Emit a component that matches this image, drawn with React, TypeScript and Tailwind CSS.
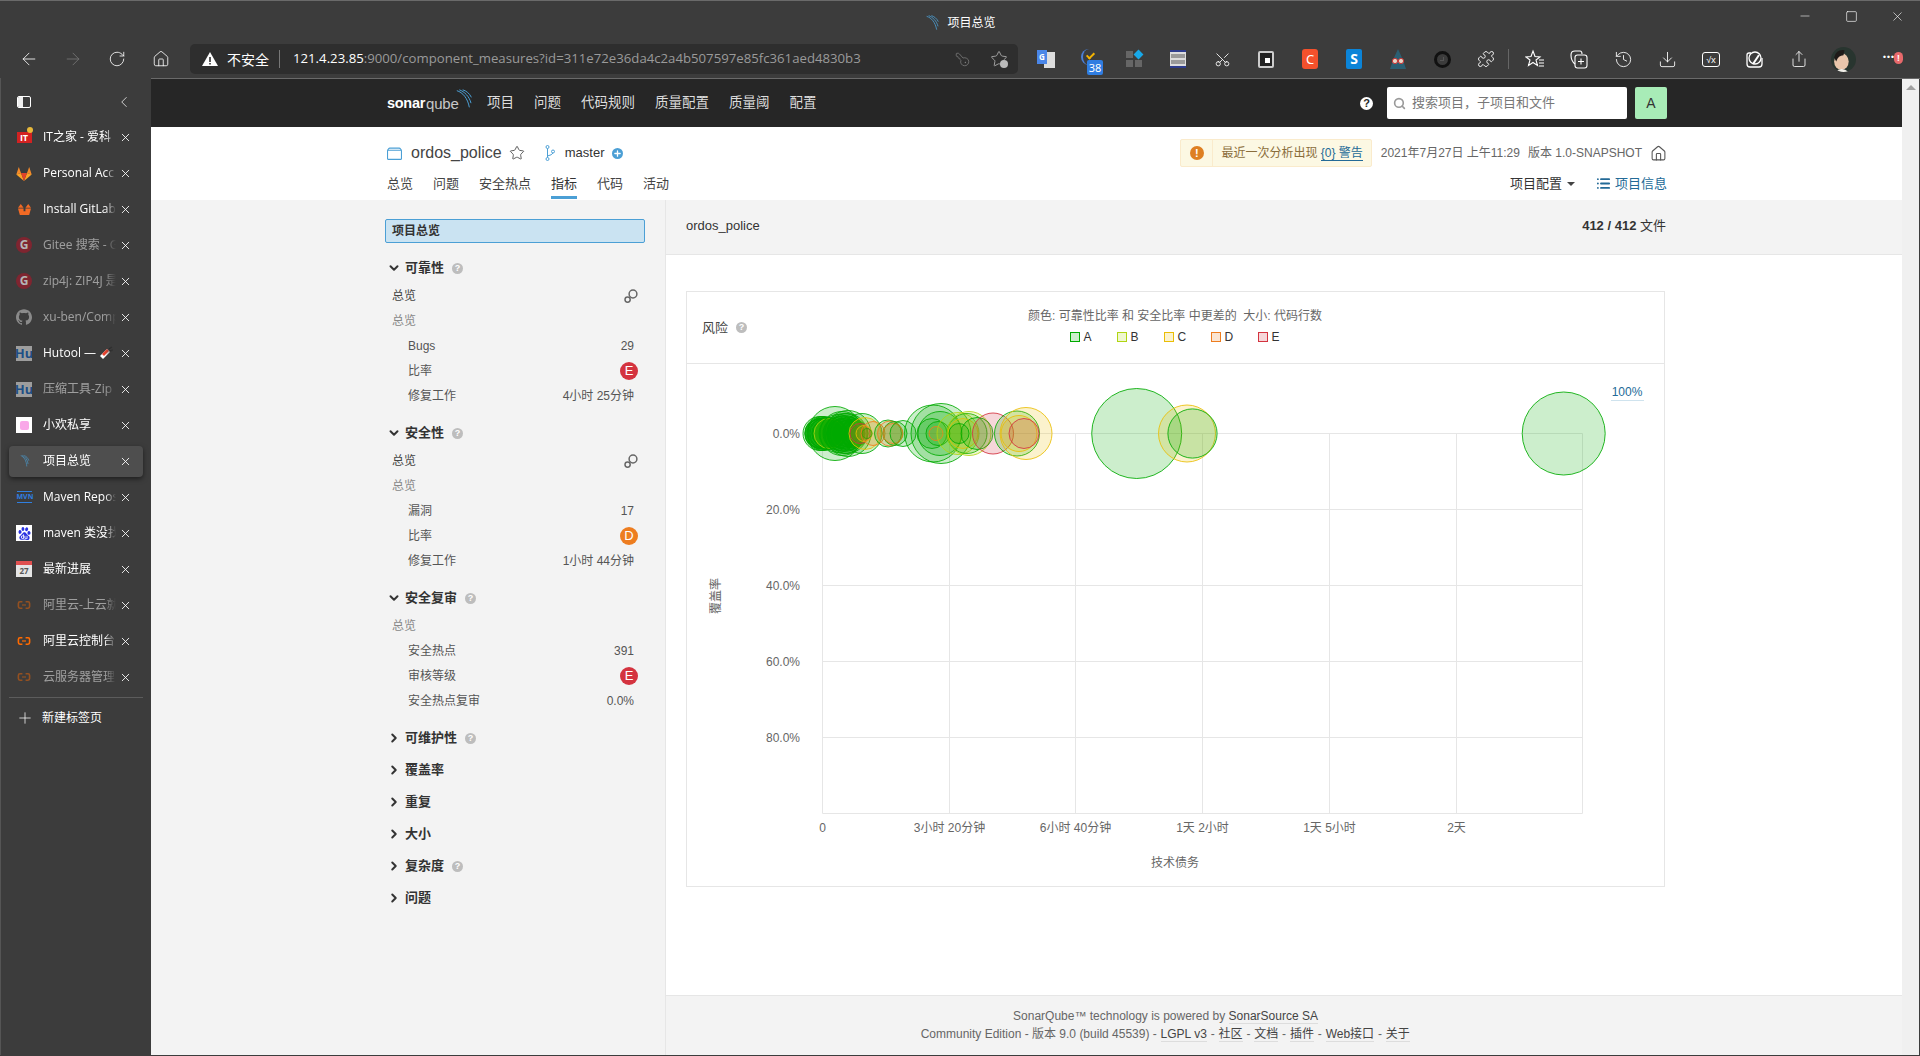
import type { ReactNode } from "react";
import {
  ArrowLeft,
  ArrowRight,
  ChevronDown,
  ChevronLeft,
  ChevronRight,
  Download,
  History,
  Home,
  KeyRound,
  List,
  Minus,
  Plus,
  Puzzle,
  RotateCw,
  Scissors,
  Search,
  Share,
  Square,
  Star,
  X,
} from "lucide-react";
import { SiBaidu, SiGithub } from "react-icons/si";

// Rating colours used by the bubble chart and the legend.
const RATING = {
  A: "#00aa00",
  B: "#b0d513",
  C: "#eabe06",
  D: "#ed7d20",
  E: "#d4333f",
} as const;

type Rating = keyof typeof RATING;

// [rating, x, radius] on page pixels, all sitting on the 0.0% line.
const BUBBLES: [Rating, number, number][] = [
  ["A", 835, 27],
  ["A", 1136.7, 45],
  ["C", 1187, 28.5],
  ["A", 1192.5, 24.6],
  ["A", 1563.7, 41.5],
  ["A", 822, 17],
  ["A", 823, 16],
  ["A", 821, 15],
  ["A", 824, 17],
  ["A", 826, 16],
  ["A", 819, 14],
  ["A", 820, 17],
  ["A", 828, 15],
  ["A", 830, 14],
  ["A", 825, 13],
  ["A", 822, 14],
  ["A", 824, 15],
  ["A", 827, 13],
  ["A", 820, 15],
  ["A", 826, 14],
  ["A", 829, 16],
  ["A", 832, 15],
  ["A", 834, 13],
  ["A", 836, 16],
  ["B", 829, 15],
  ["A", 848, 23],
  ["A", 847, 20],
  ["A", 845, 18],
  ["A", 840, 17],
  ["A", 843, 15],
  ["A", 850, 14],
  ["A", 846, 13],
  ["A", 852, 12],
  ["A", 844, 20],
  ["A", 842, 22],
  ["A", 849, 16],
  ["A", 841, 14],
  ["A", 854, 14],
  ["A", 838, 19],
  ["A", 847, 17],
  ["A", 856, 12],
  ["A", 862, 20],
  ["C", 865, 16],
  ["E", 860, 10],
  ["C", 864, 8],
  ["A", 867, 5],
  ["D", 873, 12],
  ["A", 888, 13.5],
  ["D", 890, 12.5],
  ["A", 895, 12],
  ["D", 893, 10],
  ["A", 903, 13],
  ["A", 933, 28.5],
  ["A", 941, 30],
  ["A", 940, 22],
  ["A", 932, 15],
  ["A", 938, 12],
  ["D", 936, 7],
  ["B", 958, 21],
  ["A", 967, 20],
  ["C", 963, 15],
  ["B", 969, 22],
  ["A", 959, 10],
  ["A", 977, 16],
  ["E", 993, 20.5],
  ["A", 1017, 22.5],
  ["C", 1026, 26],
  ["C", 1019, 18],
  ["E", 1024, 15],
];

const Y_TICKS = [
  ["0.0%", 433.5],
  ["20.0%", 509.5],
  ["40.0%", 585.5],
  ["60.0%", 661.5],
  ["80.0%", 737.5],
] as const;

const X_TICKS = [
  ["0", 822.5],
  ["3小时 20分钟", 949.5],
  ["6小时 40分钟", 1075.5],
  ["1天 2小时", 1202.5],
  ["1天 5小时", 1329.5],
  ["2天", 1456.5],
] as const;

function SonarArcs({ className }: { className?: string }) {
  return (
    <svg viewBox="0 0 20 24" fill="none" stroke="#4b9fd5" strokeWidth="1.2" className={className}>
      <path d="M2 2 C9 4 15 11 17 22" />
      <path d="M5 1 C11 3 17 9 19 17" />
      <path d="M9 1 C13 2 17 5 19.5 10" />
    </svg>
  );
}

function AliIcon() {
  return (
    <svg viewBox="0 0 16 10" className="h-[8px] w-[16px]" fill="none" stroke="#ff6a00" strokeWidth="2">
      <path d="M6 1 H3 Q1 1 1 3 V7 Q1 9 3 9 H6" />
      <path d="M10 1 H13 Q15 1 15 3 V7 Q15 9 13 9 H10" />
      <path d="M5.5 5 H10.5" strokeWidth="1.5" />
    </svg>
  );
}

function HuIcon() {
  return (
    <div className="flex h-[15px] w-[16px] items-center justify-center overflow-hidden bg-[#9d9d9d] text-[13px] font-bold leading-none text-[#1d4f86]">
      Hu
    </div>
  );
}

function GiteeIcon() {
  return (
    <div className="flex h-[16px] w-[16px] items-center justify-center rounded-full bg-[#7f2530] text-[12px] font-bold leading-none text-[#b5b5b5]">
      G
    </div>
  );
}

function GitLabIcon() {
  return (
    <svg viewBox="0 0 16 15" className="h-[15px] w-[16px]">
      <path d="M0.3 8.5 L2.8 1 L5 7 Z" fill="#f58a2a" />
      <path d="M15.7 8.5 L13.2 1 L11 7 Z" fill="#f58a2a" />
      <path d="M0.3 8.5 L5 7 L8 15 Z" fill="#fca326" />
      <path d="M15.7 8.5 L11 7 L8 15 Z" fill="#fca326" />
      <path d="M5 7 H11 L8 15 Z" fill="#e24329" />
    </svg>
  );
}

// The little firecracker in the Hutool tab title.
function Firecracker() {
  return (
    <svg viewBox="0 0 14 14" className="inline h-[14px] w-[14px] align-[-3px]">
      <path d="M1 10 L8 3 L11 6 L4 13 Z" fill="#fff" />
      <path d="M3 8 L8 3 L10 5 L5 10 Z" fill="#e8432e" />
      <path d="M10 3 L13 1 M11 5 L14 4" stroke="#222" strokeWidth="1.4" />
    </svg>
  );
}

const TABS: { title: ReactNode; icon: ReactNode; dim?: boolean; active?: boolean }[] = [
  {
    title: "IT之家 - 爱科",
    icon: (
      <div className="relative flex h-[11px] w-[15px] items-center justify-center bg-[#d22222] text-[9px] font-bold leading-none text-white">
        IT
        <span className="absolute -right-[1px] -top-[5px] h-[6px] w-[6px] rounded-full bg-[#e8b93a]" />
      </div>
    ),
  },
  { title: "Personal Acc", icon: <GitLabIcon /> },
  {
    title: "Install GitLab",
    icon: (
      <svg viewBox="0 0 16 14" className="h-[13px] w-[15px]" fill="#f26a24">
        <path d="M1 5 L4 1 L7 5 Z M9 5 L12 1 L15 5 Z M1 6 H7 V9 H9 V6 H15 L13 13 H3 Z" />
      </svg>
    ),
  },
  { title: "Gitee 搜索 - G", dim: true, icon: <GiteeIcon /> },
  { title: "zip4j: ZIP4J 是", dim: true, icon: <GiteeIcon /> },
  { title: "xu-ben/Comp", dim: true, icon: <SiGithub className="h-[16px] w-[16px] text-[#8a8a8a]" /> },
  {
    title: (
      <>
        Hutool — <Firecracker />
      </>
    ),
    icon: <HuIcon />,
  },
  { title: "压缩工具-Zip", dim: true, icon: <HuIcon /> },
  {
    title: "小欢私享",
    icon: (
      <div className="flex h-[16px] w-[16px] items-center justify-center bg-white">
        <div className="h-[9px] w-[9px] rounded-[2px] bg-[#f9a8e8]" />
      </div>
    ),
  },
  { title: "项目总览", active: true, icon: <SonarArcs className="h-[12px] w-[16px] rotate-[8deg]" /> },
  {
    title: "Maven Repos",
    icon: (
      <div className="flex h-[12px] w-[15px] flex-col justify-between border-y border-[#2f7fe0] text-center text-[7px] font-bold leading-[10px] text-[#2f7fe0]">
        MVN
      </div>
    ),
  },
  {
    title: "maven 类没找",
    icon: (
      <div className="flex h-[16px] w-[16px] items-center justify-center bg-white">
        <SiBaidu className="h-[13px] w-[13px] text-[#2932e1]" />
      </div>
    ),
  },
  {
    title: "最新进展",
    icon: (
      <div className="flex h-[16px] w-[16px] flex-col bg-[#e5e5e5]">
        <div className="h-[4px] bg-[#e05050]" />
        <div className="text-center text-[8px] font-bold leading-[11px] text-[#555]">27</div>
      </div>
    ),
  },
  {
    title: "阿里云-上云就",
    dim: true,
    icon: (
      <div className="opacity-45">
        <AliIcon />
      </div>
    ),
  },
  { title: "阿里云控制台", icon: <AliIcon /> },
  {
    title: "云服务器管理",
    dim: true,
    icon: (
      <div className="opacity-45">
        <AliIcon />
      </div>
    ),
  },
];

function VerticalTabs() {
  return (
    <div className="flex w-[151px] shrink-0 flex-col border-l border-[#555] text-[12px] text-white [font-family:'Open_Sans','Noto_Sans_CJK_SC',sans-serif]">
      <div className="flex h-[39px] items-center justify-between pl-[16px] pr-[18px] pt-[9px]">
        <div className="flex h-[12px] w-[14px] overflow-hidden rounded-[2px] border border-white">
          <div className="w-[5px] bg-[#eee]" />
        </div>
        <ChevronLeft size={18} strokeWidth={1} />
      </div>
      <div className="flex flex-col pt-[2px]">
        {TABS.map((tab, i) => (
          <div
            key={i}
            className={
              tab.active
                ? "relative mx-[8px] my-[2.5px] flex h-[31px] items-center rounded-[4px] bg-[#4e4e4e] shadow-[0_2px_5px_rgba(0,0,0,0.5)]"
                : "relative mx-[8px] flex h-[36px] items-center"
            }
          >
            <div className="flex w-[30px] shrink-0 items-center justify-center">{tab.icon}</div>
            <div
              className={
                "w-[77px] shrink-0 overflow-hidden whitespace-nowrap pl-[4px] [mask-image:linear-gradient(to_right,black_86%,transparent)] " +
                (tab.dim ? "opacity-50" : "")
              }
            >
              {tab.title}
            </div>
            <X size={13} strokeWidth={1.6} className="ml-[3px] shrink-0" />
          </div>
        ))}
      </div>
      <div className="mx-[8px] mt-[2px] border-t border-[#5c5c5c]" />
      <div className="mt-[11px] flex items-center pl-[15px]">
        <Plus size={18} strokeWidth={1} />
        <span className="pl-[8px]">新建标签页</span>
      </div>
    </div>
  );
}

// Toolbar extension slots, 44px apart like the real browser.
function ToolSlot({ children }: { children: ReactNode }) {
  return <div className="flex w-[44px] shrink-0 items-center justify-center">{children}</div>;
}

function BrowserChrome() {
  const muted = { size: 18, strokeWidth: 1.2 };
  return (
    <>
      <div className="relative flex h-[44px] shrink-0 items-center justify-center border-t border-[#6a6a6a] text-[12px] text-white [font-family:'Open_Sans','Noto_Sans_CJK_SC',sans-serif]">
        <SonarArcs className="mr-[7px] h-[16px] w-[16px]" />
        项目总览
        <div className="absolute right-0 top-0 flex h-[30px] items-center">
          <div className="flex w-[46px] justify-center">
            <Minus size={14} strokeWidth={1} />
          </div>
          <div className="flex w-[46px] justify-center">
            <Square size={13} strokeWidth={1.2} />
          </div>
          <div className="flex w-[46px] justify-center">
            <X size={15} strokeWidth={1} />
          </div>
        </div>
      </div>
      <div className="flex h-[34px] shrink-0 items-start text-white">
        <div className="flex h-[30px] w-[190px] shrink-0 items-center">
          <ToolSlot>
            <ArrowLeft size={20} strokeWidth={1} className="ml-[14px]" />
          </ToolSlot>
          <ToolSlot>
            <ArrowRight size={20} strokeWidth={1} className="ml-[14px] text-[#777]" />
          </ToolSlot>
          <ToolSlot>
            <RotateCw size={18} strokeWidth={1.1} className="ml-[14px]" />
          </ToolSlot>
          <ToolSlot>
            <Home size={18} strokeWidth={1.1} className="ml-[14px]" />
          </ToolSlot>
        </div>
        <div className="flex h-[30px] w-[828px] shrink-0 items-center rounded-[5px] bg-[#2e2e2e] [font-family:'Open_Sans','Noto_Sans_CJK_SC',sans-serif]">
          <svg viewBox="0 0 16 14" className="ml-[12px] h-[14px] w-[16px]">
            <path d="M8 0 L16 14 H0 Z" fill="#fff" />
            <path d="M7.2 5 H8.8 V10 H7.2 Z M7.2 11 H8.8 V12.5 H7.2 Z" fill="#2e2e2e" />
          </svg>
          <span className="pl-[9px] text-[14px]">不安全</span>
          <div className="ml-[10px] h-[18px] w-px bg-[#777]" />
          <span className="whitespace-nowrap pl-[13px] text-[13.2px]">
            121.4.23.85<span className="text-[#9a9a9a]">:9000/component_measures?id=311e72e36da4c2a4b507597e85fc361aed4830b3</span>
          </span>
          <div className="flex-1" />
          <KeyRound size={15} strokeWidth={1.1} className="mr-[20px] rotate-90 text-[#888]" />
          <div className="relative mr-[10px]">
            <Star {...muted} className="text-[#aaa]" />
            <div className="absolute bottom-0 right-0 h-[8px] w-[8px] rounded-full bg-[#bbb]" />
          </div>
        </div>
        <div className="ml-[6px] flex h-[30px] items-center">
          <ToolSlot>
            <div className="relative h-[18px] w-[18px]">
              <div className="absolute right-0 top-[2px] h-[16px] w-[11px] bg-[#ddd]" />
              <div className="absolute left-0 top-0 flex h-[14px] w-[10px] items-center justify-center bg-[#4a86e8] text-[8px] font-bold text-white">G</div>
            </div>
          </ToolSlot>
          <ToolSlot>
            <div className="relative h-[20px] w-[20px]">
              <div className="absolute left-[1px] top-0 h-[16px] w-[16px] rounded-full border-l-2 border-[#4a7fd8]" />
              <div className="absolute left-[8px] top-[2px] h-[8px] w-[5px] rotate-45 border-b-2 border-r-2 border-[#f5b400]" />
              <div className="absolute -right-[3px] bottom-[-6px] flex h-[15px] w-[16px] items-center justify-center rounded-[2px] bg-[#2f7de1] text-[11px] leading-none">38</div>
            </div>
          </ToolSlot>
          <ToolSlot>
            <div className="grid grid-cols-2 gap-[2px]">
              <div className="h-[7px] w-[7px] bg-[#666]" />
              <div className="h-[7px] w-[7px] rotate-45 bg-[#18a8e8]" />
              <div className="h-[7px] w-[7px] bg-[#666]" />
              <div className="h-[7px] w-[7px] bg-[#666]" />
            </div>
          </ToolSlot>
          <ToolSlot>
            <div className="flex h-[18px] w-[16px] flex-col justify-center gap-[2px] border-y-2 border-[#2d3c8c] bg-[#ddd] px-[1px]">
              <div className="h-[4px] bg-[#9a9a9a]" />
              <div className="h-[4px] bg-[#9a9a9a]" />
            </div>
          </ToolSlot>
          <ToolSlot>
            <Scissors size={17} strokeWidth={1.2} className="-rotate-90" />
          </ToolSlot>
          <ToolSlot>
            <div className="flex h-[17px] w-[16px] items-center justify-center rounded-[2px] border-2 border-[#ccc] bg-[#222]">
              <div className="ml-[3px] mt-[3px] h-[5px] w-[5px] bg-white" />
            </div>
          </ToolSlot>
          <ToolSlot>
            <div className="flex h-[20px] w-[16px] items-center justify-center rounded-[3px] bg-[#f4512c] text-[13px] leading-none">C</div>
          </ToolSlot>
          <ToolSlot>
            <div className="flex h-[20px] w-[16px] items-center justify-center rounded-[2px] bg-[#0b84d8] text-[14px] font-bold leading-none">S</div>
          </ToolSlot>
          <ToolSlot>
            <svg viewBox="0 0 16 20" className="h-[20px] w-[16px]">
              <path d="M8 0 L13 11 L16 20 H0 L3 11 Z" fill="#2b5f73" />
              <circle cx="5" cy="12" r="2.6" fill="#e7d7c8" stroke="#c33" />
              <circle cx="11" cy="12" r="2.6" fill="#e7d7c8" stroke="#c33" />
            </svg>
          </ToolSlot>
          <ToolSlot>
            <div className="flex h-[17px] w-[17px] items-center justify-center rounded-full border-[3px] border-[#111]">
              <div className="h-[4px] w-[4px] border-b border-r border-[#555]" />
            </div>
          </ToolSlot>
          <ToolSlot>
            <Puzzle size={18} strokeWidth={1.2} />
          </ToolSlot>
          <div className="mr-[4px] h-[20px] w-px bg-[#666]" />
          <ToolSlot>
            <svg viewBox="0 0 20 20" className="h-[20px] w-[20px]" fill="none" stroke="#fff" strokeWidth="1.1">
              <path d="M8 2 L10 7.5 L15 8 L11 11 L12.5 16.5 L8 13.5 L3.5 16.5 L5 11 L1 8 L6 7.5 Z" />
              <path d="M14 11 H19 M14 14 H19 M14 17 H19" />
            </svg>
          </ToolSlot>
          <ToolSlot>
            <svg viewBox="0 0 20 20" className="h-[20px] w-[20px]" fill="none" stroke="#fff" strokeWidth="1.1">
              <rect x="6" y="6" width="12" height="13" rx="2.5" />
              <path d="M12 9.5 V15.5 M9 12.5 H15 M6 15 Q2 12 2 6 Q2 2 6 2 H11 Q13 2 13 5" />
            </svg>
          </ToolSlot>
          <ToolSlot>
            <History size={19} strokeWidth={1.1} />
          </ToolSlot>
          <ToolSlot>
            <Download size={19} strokeWidth={1.1} />
          </ToolSlot>
          <ToolSlot>
            <div className="flex h-[15px] w-[18px] items-center justify-center rounded-[3px] border border-white text-[9px] leading-none">√x</div>
          </ToolSlot>
          <ToolSlot>
            <svg viewBox="0 0 20 20" className="h-[20px] w-[20px]" fill="none" stroke="#fff" strokeWidth="1.3">
              <path d="M6 4 H4 Q2 4 2 6 V15 Q2 18 5 18 H14 Q17 18 17 15 V9" />
              <circle cx="10" cy="9" r="6" />
              <path d="M8 15 L14 6" strokeWidth="2" />
            </svg>
          </ToolSlot>
          <ToolSlot>
            <Share size={18} strokeWidth={1.1} />
          </ToolSlot>
          <ToolSlot>
            <svg viewBox="0 0 24 24" className="h-[25px] w-[25px] rounded-full">
              <rect width="24" height="24" fill="#28352f" />
              <ellipse cx="10" cy="14" rx="7" ry="8" fill="#e9c5ab" />
              <path d="M3 10 Q5 2 13 3 L12 8 Q7 8 5 14 Z" fill="#1e1a18" />
              <path d="M4 24 Q10 18 17 24 Z" fill="#f2efe9" />
            </svg>
          </ToolSlot>
          <div className="relative flex w-[44px] shrink-0 items-center justify-center pb-[4px] pl-[3px] text-[14px] font-bold leading-none">
            ···
            <div className="absolute bottom-[4px] left-[29px] flex h-[12px] w-[9px] items-center justify-center rounded-full bg-[#e8696b] text-[8px] leading-none">!</div>
          </div>
        </div>
      </div>
    </>
  );
}

function Help() {
  return (
    <span className="ml-[8px] flex h-[11px] w-[11px] items-center justify-center rounded-full bg-[#bdbdbd] text-[9px] font-bold leading-none text-white">
      ?
    </span>
  );
}

function LinkBubble() {
  return (
    <svg viewBox="0 0 14 14" fill="none" stroke="#666" className="h-[14px] w-[14px]">
      <circle cx="9" cy="5" r="3.9" strokeWidth="1.5" />
      <circle cx="3.6" cy="10.6" r="2.6" strokeWidth="1.5" />
    </svg>
  );
}

function Grade({ value }: { value: "D" | "E" }) {
  return (
    <span
      className={
        "-mr-[4px] flex h-[18px] w-[18px] items-center justify-center rounded-full text-[13px] leading-none text-white " +
        (value === "E" ? "bg-[#d4333f]" : "bg-[#ed7d20]")
      }
    >
      {value}
    </span>
  );
}

function MeasureRow({ label, value }: { label: string; value: ReactNode }) {
  return (
    <div className="flex h-[25px] items-center justify-between pl-[23px] pr-[11px]">
      <span>{label}</span>
      {value}
    </div>
  );
}

function SectionHead({ title, open, help }: { title: string; open?: boolean; help?: boolean }) {
  return (
    <div className="flex h-[24px] items-center text-[13px] font-bold text-[#333]">
      <div className="flex w-[20px] justify-center pr-[2px]">
        {open ? <ChevronDown size={14} strokeWidth={3.4} /> : <ChevronRight size={14} strokeWidth={3.4} />}
      </div>
      {title}
      {help && <Help />}
    </div>
  );
}

function Overview({ link }: { link?: boolean }) {
  return (
    <div className="flex h-[25px] items-center justify-between pl-[7px] pr-[7px] text-[#444]">
      <span>总览</span>
      {link && <LinkBubble />}
    </div>
  );
}

function SubHead() {
  return <div className="flex h-[25px] items-center pl-[7px] text-[#888]">总览</div>;
}

function MeasureSidebar() {
  return (
    <div className="w-[515px] shrink-0 border-r border-[#e6e6e6] bg-[#f3f3f3] pl-[234px] pr-[20px] pt-[19px] text-[12px] text-[#555]">
      <div className="flex h-[24px] items-center rounded-[2px] border border-[#4b9fd5] bg-[#cae3f2] pl-[6px] font-bold text-[#333]">
        项目总览
      </div>

      <div className="mt-[13px]">
        <SectionHead title="可靠性" open help />
        <div className="mt-[3px]">
          <Overview link />
          <SubHead />
          <MeasureRow label="Bugs" value="29" />
          <MeasureRow label="比率" value={<Grade value="E" />} />
          <MeasureRow label="修复工作" value="4小时 25分钟" />
        </div>
      </div>

      <div className="mt-[13px]">
        <SectionHead title="安全性" open help />
        <div className="mt-[3px]">
          <Overview link />
          <SubHead />
          <MeasureRow label="漏洞" value="17" />
          <MeasureRow label="比率" value={<Grade value="D" />} />
          <MeasureRow label="修复工作" value="1小时 44分钟" />
        </div>
      </div>

      <div className="mt-[13px]">
        <SectionHead title="安全复审" open help />
        <div className="mt-[3px]">
          <SubHead />
          <MeasureRow label="安全热点" value="391" />
          <MeasureRow label="审核等级" value={<Grade value="E" />} />
          <MeasureRow label="安全热点复审" value="0.0%" />
        </div>
      </div>

      <div className="mt-[13px] flex flex-col gap-[8px]">
        <SectionHead title="可维护性" help />
        <SectionHead title="覆盖率" />
        <SectionHead title="重复" />
        <SectionHead title="大小" />
        <SectionHead title="复杂度" help />
        <SectionHead title="问题" />
      </div>
    </div>
  );
}

function RiskChart() {
  return (
    <svg width={977} height={522} className="block text-[12px]">
      <g transform="translate(-687 -364)">
        <g stroke="#e6e6e6" fill="none">
          {Y_TICKS.map(([, y]) => (
            <line key={y} x1={822.5} x2={1582.5} y1={y} y2={y} />
          ))}
          <line x1={822.5} x2={1582.5} y1={813.5} y2={813.5} />
          {[822.5, 949.5, 1075.5, 1202.5, 1329.5, 1456.5, 1582.5].map((x) => (
            <line key={x} x1={x} x2={x} y1={433.5} y2={813.5} />
          ))}
        </g>
        {BUBBLES.map(([rating, x, r], i) => (
          <circle
            key={i}
            cx={x}
            cy={433.5}
            r={r}
            fill={RATING[rating]}
            fillOpacity={0.2}
            stroke={RATING[rating]}
            strokeOpacity={0.85}
          />
        ))}
        {Y_TICKS.map(([label, y]) => (
          <text key={label} x={800} y={y + 4} textAnchor="end" fill="#666">
            {label}
          </text>
        ))}
        {X_TICKS.map(([label, x]) => (
          <text key={label} x={x} y={832} textAnchor="middle" fill="#666">
            {label}
          </text>
        ))}
        <text x={1175} y={867} textAnchor="middle" fill="#666">
          技术债务
        </text>
        <text transform="translate(720 596) rotate(-90)" textAnchor="middle" fill="#666" fontSize="12">
          覆盖率
        </text>
        <text x={1627} y={396} textAnchor="middle" fill="#236a97">
          100%
        </text>
        <line x1={1611} x2={1644} y1={400.5} y2={400.5} stroke="#cfe3ee" />
      </g>
    </svg>
  );
}

function ChartPanel() {
  return (
    <div className="h-[596px] w-[979px] border border-[#e6e6e6]">
      <div className="flex h-[72px] items-center border-b border-[#e6e6e6]">
        <div className="flex w-[340px] shrink-0 items-center pl-[15px] text-[13px] text-[#444]">
          风险
          <Help />
        </div>
        <div className="w-[296px] shrink-0 pb-[2px] text-center text-[12px] text-[#666]">
          <div className="whitespace-nowrap">颜色: 可靠性比率 和 安全比率 中更差的 &nbsp;大小: 代码行数</div>
          <div className="mt-[3px] flex justify-center pl-[24px]">
            {(Object.keys(RATING) as Rating[]).map((rating) => (
              <div key={rating} className="flex w-[47px] items-center text-[#333]">
                <svg width={10} height={10} className="mr-[4px]">
                  <rect
                    x={0.5}
                    y={0.5}
                    width={9}
                    height={9}
                    fill={RATING[rating]}
                    fillOpacity={0.2}
                    stroke={RATING[rating]}
                  />
                </svg>
                {rating}
              </div>
            ))}
          </div>
        </div>
      </div>
      <RiskChart />
    </div>
  );
}

function SonarPage() {
  const navItems = ["项目", "问题", "代码规则", "质量配置", "质量阈", "配置"];
  const tabs = ["总览", "问题", "安全热点", "指标", "代码", "活动"];
  const footerLink = "mx-[0.5px] border-b border-[#ddd] text-[#444]";
  return (
    <div className="flex min-w-0 flex-1 flex-col bg-white text-[12px] text-[#333] [font-family:'Liberation_Sans','Noto_Sans_CJK_SC',sans-serif]">
      <div className="flex h-[48px] shrink-0 items-center bg-[#262626] pl-[236px] pr-[235px] text-[#ddd]">
        <div className="relative flex w-[84px] shrink-0 items-center leading-none text-white">
          <span className="text-[14.5px] font-bold tracking-[-0.3px]">sonar</span>
          <span className="ml-[1px] text-[15px] tracking-[-0.2px] text-[#c8c8c8]">qube</span>
          <SonarArcs className="absolute -right-[1px] -top-[7px] h-[20px] w-[17px]" />
        </div>
        <div className="ml-[16px] flex gap-[20px] text-[13.5px]">
          {navItems.map((item) => (
            <span key={item}>{item}</span>
          ))}
        </div>
        <div className="flex-1" />
        <span className="mr-[14px] flex h-[13px] w-[13px] items-center justify-center rounded-full bg-white text-[11px] font-bold leading-none text-[#262626]">
          ?
        </span>
        <div className="flex h-[32px] w-[240px] items-center rounded-[2px] bg-white pl-[6px] text-[13px] text-[#777]">
          <Search size={13} strokeWidth={3} className="mr-[6px] text-[#999]" />
          搜索项目，子项目和文件
        </div>
        <div className="ml-[8px] flex h-[32px] w-[32px] items-center justify-center rounded-[2px] bg-[#a8ecb7] text-[14px] text-[#333]">
          A
        </div>
      </div>

      <div className="h-[73px] shrink-0 bg-white pl-[236px] pr-[235px]">
        <div className="mt-[12px] flex h-[28px] items-center">
          <svg viewBox="0 0 14 12" fill="none" stroke="#4b9fd5" className="h-[13px] w-[15px]">
            <rect x="0.5" y="3" width="13" height="8.5" rx="0.5" />
            <path d="M2 1 H12 M0.5 3 L2 1 M13.5 3 L12 1" />
          </svg>
          <span className="ml-[9px] text-[16px] text-[#444]">ordos_police</span>
          <Star size={16} strokeWidth={1.4} className="ml-[7px] text-[#555]" />
          <svg viewBox="0 0 10 16" fill="none" stroke="#4b9fd5" className="ml-[20px] h-[16px] w-[10px]">
            <circle cx="2.5" cy="2" r="1.5" />
            <circle cx="2.5" cy="14" r="1.5" />
            <circle cx="8" cy="6.5" r="1.5" />
            <path d="M2.5 3.5 V12.5 M2.5 11 Q7 10 8 8" />
          </svg>
          <span className="ml-[10px] text-[13px] text-[#333]">master</span>
          <span className="ml-[8px] flex h-[11px] w-[11px] items-center justify-center rounded-full bg-[#4b9fd5] text-[#fff]">
            <Plus size={9} strokeWidth={3.5} />
          </span>
          <div className="flex-1" />
          <div className="flex h-[28px] items-center rounded-[2px] border border-[#faebcc] bg-[#fcf8e3] text-[#8a6d3b]">
            <div className="flex h-full w-[32px] items-center justify-center border-r border-[#faebcc]">
              <span className="flex h-[14px] w-[14px] items-center justify-center rounded-full bg-[#de7f22] text-[11px] font-bold leading-none text-white">
                !
              </span>
            </div>
            <span className="whitespace-nowrap px-[8px]">
              最近一次分析出现{" "}
              <span className="border-b border-[#236a97] text-[#236a97]">{"{0} 警告"}</span>
            </span>
          </div>
          <span className="ml-[9px] text-[#666]">2021年7月27日 上午11:29</span>
          <span className="ml-[8px] text-[#666]">版本 1.0-SNAPSHOT</span>
          <Home size={17} strokeWidth={1.5} className="ml-[8px] text-[#555]" />
        </div>
        <div className="mt-[4px] flex h-[28px] items-start text-[13px]">
          {tabs.map((tab) => (
            <div
              key={tab}
              className={
                tab === "指标"
                  ? "mr-[20px] flex h-[28px] items-center border-b-[3px] border-[#4b9fd5] text-[#333]"
                  : "mr-[20px] flex h-[28px] items-center pb-[3px] text-[#444]"
              }
            >
              {tab}
            </div>
          ))}
          <div className="flex-1" />
          <div className="flex h-[25px] items-center text-[#333]">
            项目配置
            <span className="ml-[5px] h-0 w-0 border-x-[4px] border-t-[4px] border-x-transparent border-t-[#444]" />
          </div>
          <div className="ml-[21px] flex h-[25px] items-center text-[#236a97]">
            <List size={15} strokeWidth={3} className="mr-[4px]" />
            项目信息
          </div>
        </div>
      </div>

      <div className="flex min-h-0 flex-1">
        <MeasureSidebar />
        <div className="flex min-w-0 flex-1 flex-col">
          <div className="flex h-[55px] shrink-0 items-center justify-between border-b border-[#e6e6e6] bg-[#f3f3f3] pl-[20px] pr-[236px] text-[13px]">
            <span className="pb-[3px]">ordos_police</span>
            <span className="pb-[3px]">
              <b>412 / 412</b> 文件
            </span>
          </div>
          <div className="flex-1 pl-[20px] pt-[36px]">
            <ChartPanel />
          </div>
          <div className="h-[60px] shrink-0 border-t border-[#e6e6e6] bg-[#f3f3f3] pt-[11px] text-[#666]">
            <div className="w-[999px] text-center leading-[18px]">
              <div>
                SonarQube™ technology is powered by{" "}
                <span className="border-b border-[#ddd] text-[#444]">SonarSource SA</span>
              </div>
              <div>
                Community Edition - 版本 9.0 (build 45539) -{" "}
                <span className={footerLink}>LGPL v3</span> -{" "}
                <span className={footerLink}>社区</span> -{" "}
                <span className={footerLink}>文档</span> -{" "}
                <span className={footerLink}>插件</span> -{" "}
                <span className={footerLink}>Web接口</span> -{" "}
                <span className={footerLink}>关于</span>
              </div>
            </div>
          </div>
        </div>
      </div>
    </div>
  );
}

export default function App() {
  return (
    <div className="flex h-[1056px] w-[1920px] flex-col overflow-hidden bg-[#3c3c3c]">
      <BrowserChrome />
      <div className="flex min-h-0 flex-1 pb-px">
        <VerticalTabs />
        <div className="flex min-w-0 flex-1 border-t border-[#6a6a6a] pr-px">
          <SonarPage />
          <div className="flex w-[17px] shrink-0 justify-center bg-[#f0f0f0] pt-[6px]">
            <div className="h-0 w-0 border-x-[5px] border-b-[5px] border-x-transparent border-b-[#a0a0a0]" />
          </div>
        </div>
      </div>
    </div>
  );
}
